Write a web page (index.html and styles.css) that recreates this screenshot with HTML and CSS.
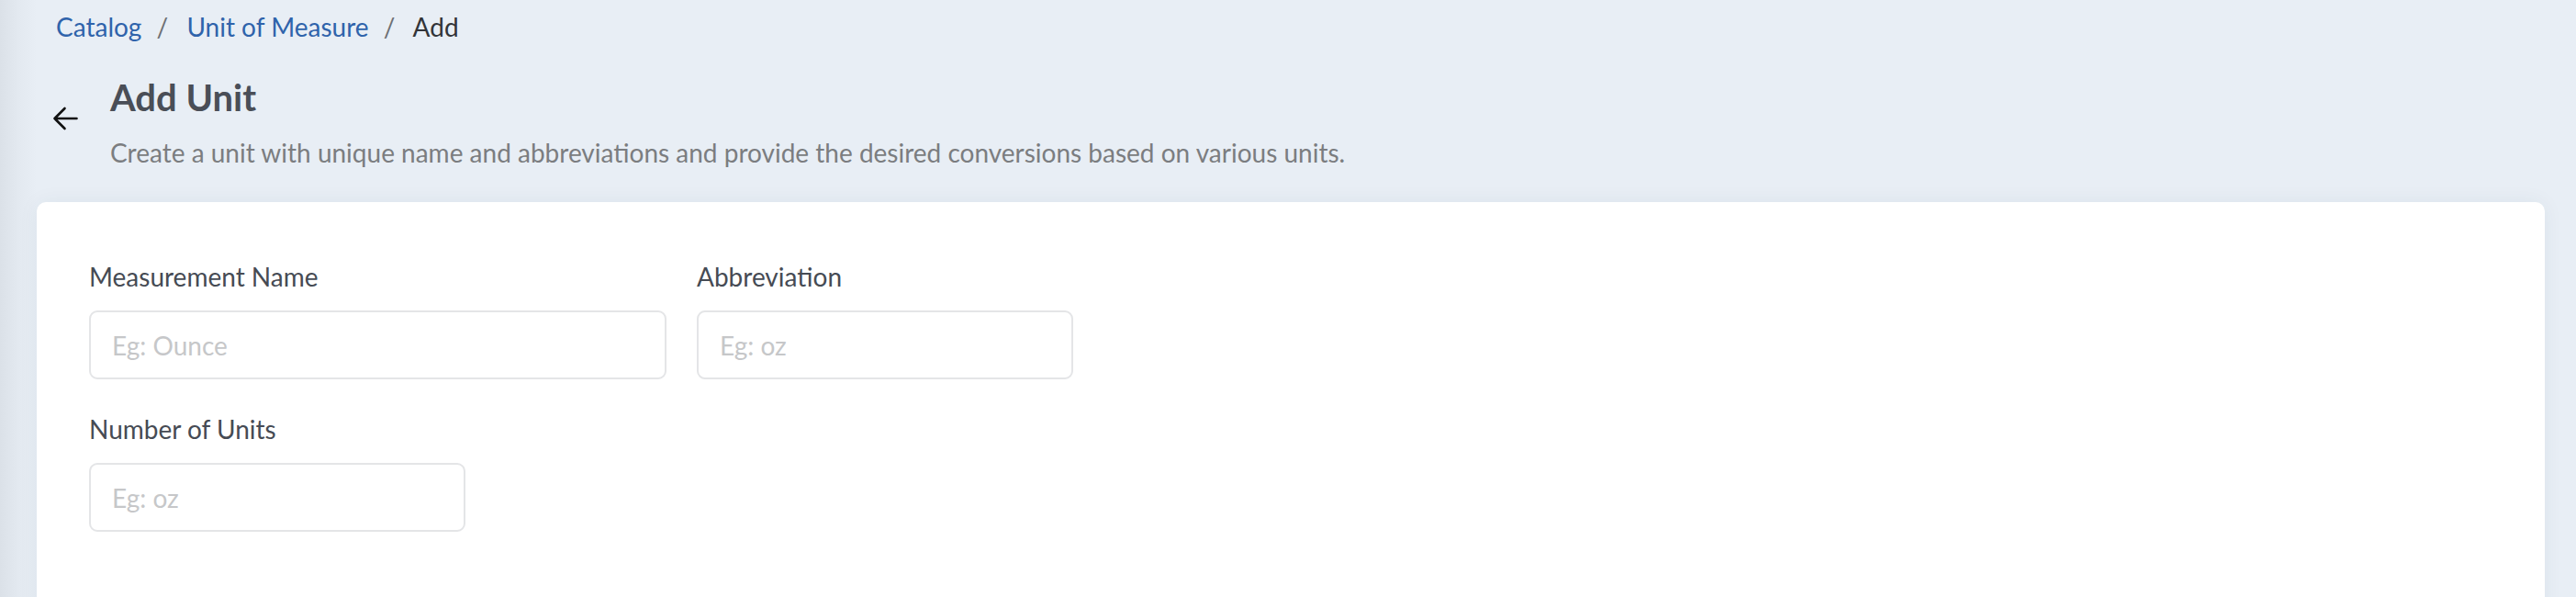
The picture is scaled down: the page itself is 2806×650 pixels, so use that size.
FILE: index.html
```html
<!DOCTYPE html>
<html lang="en">
  <head>
    <meta charset="UTF-8" />
    <meta name="viewport" content="width=device-width, initial-scale=1.0" />
    <title>Add Unit</title>
    <link rel="stylesheet" href="styles.css">
  </head>
  <body>
    <div class="page">
      <!-- Breadcrumb -->
      <nav class="breadcrumb">
        <a href="#">Catalog</a>
        <span class="sep">/</span>
        <a href="#">Unit of Measure</a>
        <span class="sep">/</span>
        <span class="current">Add</span>
      </nav>

      <!-- Page header -->
      <header class="page-header">
        <a href="#" class="back-link" aria-label="Back">
          <svg width="28" height="26" viewBox="0 0 28 26" fill="none">
            <path d="M26.5 13H2.5M13.5 2L2.5 13L13.5 24" stroke="#111" stroke-width="2.6" stroke-linecap="round" stroke-linejoin="round" />
          </svg>
        </a>
        <div class="header-text">
          <h1>Add Unit</h1>
          <p>Create a unit with unique name and abbreviations and provide the desired conversions based on various units.</p>
        </div>
      </header>

      <!-- Form card -->
      <section class="card">
        <div class="form-row">
          <div class="field field-wide">
            <label for="name">Measurement Name</label>
            <input type="text" id="name" placeholder="Eg: Ounce" />
          </div>
          <div class="field">
            <label for="abbr">Abbreviation</label>
            <input type="text" id="abbr" placeholder="Eg: oz" />
          </div>
        </div>
        <div class="form-row">
          <div class="field">
            <label for="count">Number of Units</label>
            <input type="text" id="count" placeholder="Eg: oz" />
          </div>
        </div>
      </section>
    </div>
  </body>
</html>
```

FILE: styles.css
```css
:root {
  --bg: #e8eef5;
  --link: #2f63ab;
  --text: #464b54;
  --muted: #7b7d80;
  --border: #e4e5e7;
  --placeholder: #c6c7c9;
}

body {
  font-family: 'Lato', 'Open Sans', sans-serif;
  margin: 0;
  background: linear-gradient(to right, #dbe1e8 0, #e3e9f0 20px, var(--bg) 40px);
  color: var(--text);
}

.page {
  padding: 8px 34px 0 40px;
}

.breadcrumb {
  font-size: 28px;
  line-height: 42px;
  padding-left: 21px;
  color: #323438;
}

.breadcrumb a {
  color: var(--link);
  text-decoration: none;
}

.breadcrumb .sep {
  color: #6e7074;
  margin: 0 13px 0 9px;
}

.page-header {
  display: flex;
  align-items: flex-start;
  margin-top: 32px;
}

.back-link {
  display: flex;
  margin: 34px 0 0 17px;
  width: 28px;
}

.header-text {
  margin-left: 35px;
}

.header-text h1 {
  margin: 0;
  font-size: 40px;
  font-weight: 700;
  line-height: 48px;
  color: #4a4e57;
}

.header-text p {
  margin: 15px 0 0;
  font-size: 28px;
  line-height: 42px;
  color: var(--muted);
}

.card {
  margin-top: 33px;
  background: #fff;
  border-radius: 10px;
  box-shadow: 0 0 22px rgba(40, 60, 90, 0.06);
  padding: 60px 57px 0;
  min-height: 500px;
}

.form-row {
  display: flex;
  gap: 33px;
  margin-bottom: 33px;
}

.field {
  display: flex;
  flex-direction: column;
  width: 410px;
}

.field-wide {
  width: 629px;
}

.field label {
  font-size: 28px;
  line-height: 42px;
  color: var(--text);
  margin-bottom: 16px;
}

.field input {
  box-sizing: border-box;
  height: 75px;
  border: 2px solid var(--border);
  border-radius: 9px;
  padding: 0 23px;
  font-family: inherit;
  font-size: 28px;
  color: var(--text);
  outline: none;
}

.field input::placeholder {
  color: var(--placeholder);
}
```
